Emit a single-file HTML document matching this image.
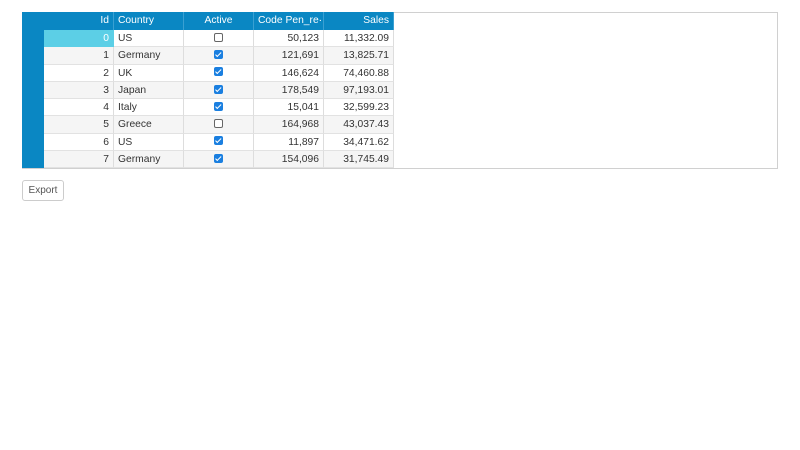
<!DOCTYPE html>
<html><head><style>
body{margin:0;background:#fff;font-family:"Liberation Sans",sans-serif;font-size:10.3px;color:#333}
.wrap{position:absolute;left:22px;top:12px;width:756px;height:157px;border:1px solid #d0d0d0;box-sizing:border-box}
.row{position:absolute;left:22px;width:372px;height:17.25px;display:flex}
.row div{box-sizing:border-box;height:100%;line-height:18px;padding:0 4px;border-right:1px solid #ddd;border-bottom:1px solid #e2e2e2;white-space:nowrap;overflow:hidden}
.row .rh{width:22px;background:#0a87c3;border-color:#0a87c3}
.w{width:70px}
.hd div{background:#0a87c3;color:#fff;border-right:1px solid #3aa0d2;border-bottom:none}
.odd div{background:#f5f5f5}
.odd .rh{background:#0a87c3}
.r{text-align:right}.c{text-align:center}
.cb{display:inline-block;width:9px;height:9px;border-radius:2px;background:#1a7fe0;vertical-align:middle;position:relative;margin-top:-2px}
.cb:after{content:"";position:absolute;left:3px;top:1px;width:2px;height:4.5px;border:solid #fff;border-width:0 1.4px 1.4px 0;transform:rotate(45deg)}
.cb.off{background:#fff;border:1px solid #666;box-sizing:border-box}
.cb.off:after{display:none}
.btn{position:absolute;left:22px;top:180px;width:42px;height:21px;border:1px solid #ccc;border-radius:3px;box-sizing:border-box;font-size:10px;color:#555;text-align:center;line-height:19px}
</style></head><body>
<div class="wrap"></div>
<div class="row hd" style="top:12px;height:18px"><div class="rh"></div><div class="w r">Id</div><div class="w">Country</div><div class="w c">Active</div><div class="w">Code Pen_re···</div><div class="w r">Sales</div></div>
<div class="row" style="top:30px"><div class="rh"></div><div class="w r" style="background:#5ccfe6;color:#fff;border-color:#5ccfe6">0</div><div class="w">US</div><div class="w c"><span class="cb off"></span></div><div class="w r">50,123</div><div class="w r">11,332.09</div></div>
<div class="row odd" style="top:47.25px"><div class="rh"></div><div class="w r">1</div><div class="w">Germany</div><div class="w c"><span class="cb"></span></div><div class="w r">121,691</div><div class="w r">13,825.71</div></div>
<div class="row" style="top:64.5px"><div class="rh"></div><div class="w r">2</div><div class="w">UK</div><div class="w c"><span class="cb"></span></div><div class="w r">146,624</div><div class="w r">74,460.88</div></div>
<div class="row odd" style="top:81.75px"><div class="rh"></div><div class="w r">3</div><div class="w">Japan</div><div class="w c"><span class="cb"></span></div><div class="w r">178,549</div><div class="w r">97,193.01</div></div>
<div class="row" style="top:99px"><div class="rh"></div><div class="w r">4</div><div class="w">Italy</div><div class="w c"><span class="cb"></span></div><div class="w r">15,041</div><div class="w r">32,599.23</div></div>
<div class="row odd" style="top:116.25px"><div class="rh"></div><div class="w r">5</div><div class="w">Greece</div><div class="w c"><span class="cb off"></span></div><div class="w r">164,968</div><div class="w r">43,037.43</div></div>
<div class="row" style="top:133.5px"><div class="rh"></div><div class="w r">6</div><div class="w">US</div><div class="w c"><span class="cb"></span></div><div class="w r">11,897</div><div class="w r">34,471.62</div></div>
<div class="row odd" style="top:150.75px"><div class="rh"></div><div class="w r">7</div><div class="w">Germany</div><div class="w c"><span class="cb"></span></div><div class="w r">154,096</div><div class="w r">31,745.49</div></div>
<div class="btn">Export</div>
</body></html>
